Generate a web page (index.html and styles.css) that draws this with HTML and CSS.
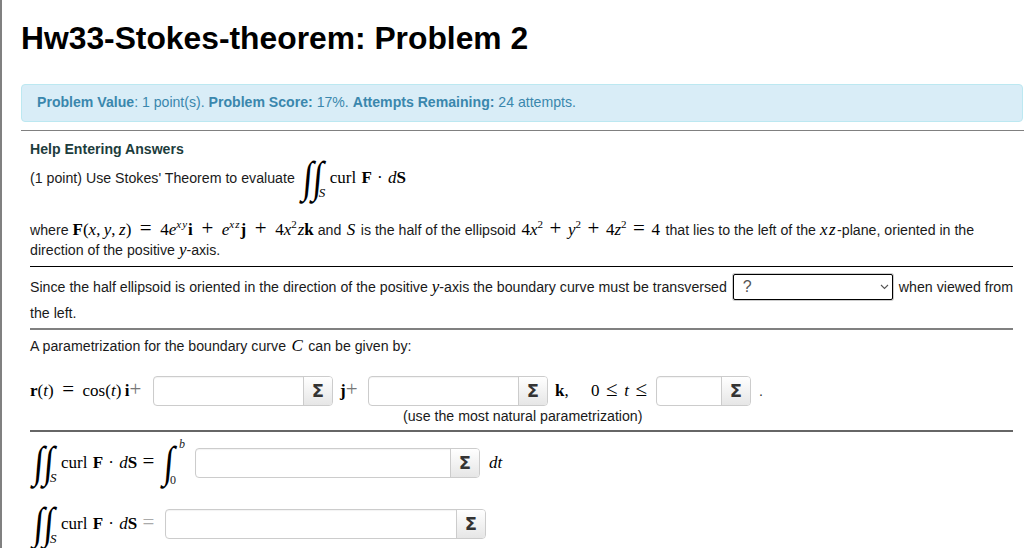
FILE: index.html
```html
<!DOCTYPE html>
<html lang="en">

<head>
    <meta charset="UTF-8">
    <title>Hw33-Stokes-theorem: Problem 2</title>
    <link rel="stylesheet" href="styles.css">
</head>

<body>

    <div class="page">
        <h1 class="title">Hw33-Stokes-theorem: Problem 2</h1>

        <div class="alert">
            <b>Problem Value</b>: 1 point(s). <b>Problem Score:</b> 17%. <b>Attempts Remaining:</b> 24 attempts.
        </div>

        <hr class="rule-top">

        <div class="problem">
            <div class="help">Help Entering Answers</div>

            <div class="row row-intro">
                <span>(1 point) Use Stokes' Theorem to evaluate</span>
                <span class="dbl-int"><span class="int">∫</span><span class="int int-b">∫</span><i class="int-sub">S</i></span>
                <span class="math">curl <b>F</b> · <i>d</i><b>S</b></span>
            </div>

            <p class="para para-where">
                where <span class="math wider"><b>F</b>(<i>x</i>,&thinsp;<i>y</i>,&thinsp;<i>z</i>) <span class="op">=</span> 4<i>e</i><sup><i>xy</i></sup><b>i</b> <span class="op">+</span> <i>e</i><sup><i>xz</i></sup><b>j</b> <span class="op">+</span> 4<i>x</i><sup>2</sup><i>z</i><b>k</b></span>
                and <span class="math pad"><i>S</i></span> is the half of the ellipsoid
                <span class="math wide pad">4<i>x</i><sup>2</sup> <span class="op">+</span> <i>y</i><sup>2</sup> <span class="op">+</span> 4<i>z</i><sup>2</sup> <span class="op">=</span> 4</span>
                that lies to the left of the <span class="math spaced"><i>xz</i></span>-plane, oriented in the
                direction of the positive <span class="math"><i>y</i></span>-axis.
            </p>

            <hr class="rule-black">

            <div class="row row-since">
                <span>Since the half ellipsoid is oriented in the direction of the positive <span class="math"><i>y</i></span>-axis the boundary curve must be transversed</span>
                <div class="fake-select">
                    <span>?</span>
                    <svg class="chevron" width="9" height="6" viewBox="0 0 9 6"><path d="M1 1l3.5 3.5L8 1" fill="none" stroke="#555" stroke-width="1.1"/></svg>
                </div>
                <span>when viewed from</span>
            </div>
            <div class="left-line">the left.</div>

            <hr class="rule-gray">

            <div class="param-line">A parametrization for the boundary curve <span class="math pad"><i>C</i></span> can be given by:</div>

            <div class="row row-r">
                <span class="math wider r-lhs"><b>r</b>(<i>t</i>) <span class="op">=</span> cos(<i>t</i>)&thinsp;<b>i</b><span class="op plus">+</span></span>
                <div class="answer w-180"><input class="answer-input"><span class="sigma">Σ</span></div>
                <span class="math j-label"><b>j</b><span class="op plus">+</span></span>
                <div class="answer w-180"><input class="answer-input"><span class="sigma">Σ</span></div>
                <span class="math k-label"><b>k</b>,</span>
                <span class="math wide range">0 <span class="op">≤</span> <i>t</i> <span class="op">≤</span></span>
                <div class="answer w-95"><input class="answer-input"><span class="sigma">Σ</span></div>
                <span class="dot">.</span>
            </div>
            <div class="natural">(use the most natural parametrization)</div>

            <hr class="rule-dark">

            <div class="row row-int">
                <span class="dbl-int"><span class="int">∫</span><span class="int int-b">∫</span><i class="int-sub">S</i></span>
                <span class="math lhs-a">curl <b>F</b> · <i>d</i><b>S</b> <span class="op">=</span></span>
                <span class="sgl-int"><span class="int">∫</span><i class="lim-top">b</i><span class="lim-bot">0</span></span>
                <div class="answer w-285"><input class="answer-input"><span class="sigma">Σ</span></div>
                <span class="math dt"><i>dt</i></span>
            </div>

            <div class="row row-int row-last">
                <span class="dbl-int"><span class="int">∫</span><span class="int int-b">∫</span><i class="int-sub">S</i></span>
                <span class="math lhs-b">curl <b>F</b> · <i>d</i><b>S</b> <span class="op faded">=</span></span>
                <div class="answer w-321"><input class="answer-input"><span class="sigma">Σ</span></div>
            </div>
        </div>
    </div>

</body>

</html>
```

FILE: styles.css
```css
* {
    box-sizing: border-box;
}

html, body {
    margin: 0;
    height: 548px;
    overflow: hidden;
}

body {
    font-family: "Liberation Sans", Arial, sans-serif;
    font-size: 14.1px;
    color: #1a1a1a;
    background-color: #fff;
    border-left: 2px solid #808080;
}

.page {
    padding-left: 19px;
}

.title {
    margin: 0;
    padding-top: 20px;
    height: 84px;
    font-size: 31.8px;
    line-height: 36px;
    font-weight: bold;
    color: #000;
}

.alert {
    height: 38px;
    margin-right: 1px;
    padding: 0 15px;
    line-height: 35px;
    color: #3a87ad;
    background-color: #d9edf7;
    border: 1px solid #bce8f1;
    border-radius: 4px;
}

hr {
    margin: 0;
    border: 0;
}

.rule-top {
    margin-top: 8px;
    height: 1px;
    background-color: #808080;
}

.problem {
    padding-left: 9px;
    padding-right: 11px;
    font-size: 14.18px;
}

.help {
    margin-top: 11px;
    height: 15px;
    line-height: 15px;
    font-size: 14.1px;
    font-weight: bold;
    color: #1d3d3d;
}

.row {
    display: flex;
    align-items: center;
}

.math {
    font-family: "Liberation Serif", "Times New Roman", serif;
    font-size: 17px;
    line-height: 16px;
    word-spacing: 1px;
    color: #000;
}

.math sup {
    font-size: 11px;
    line-height: 0;
}

.op {
    font-size: 21px;
    line-height: 0;
}

.wide {
    word-spacing: 2.3px;
}

.wider {
    word-spacing: 4.3px;
}

.wider sup {
    letter-spacing: 1px;
}

.pad {
    padding: 0 1.5px;
}

.spaced {
    letter-spacing: 1.5px;
}

.row-intro {
    margin-top: 1px;
    height: 40px;
}

.dbl-int {
    position: relative;
    display: inline-block;
    width: 32px;
    height: 40px;
    margin-left: 3px;
    flex: none;
}

.int {
    position: absolute;
    left: 4px;
    top: 0;
    font-family: "Liberation Serif", serif;
    font-size: 44px;
    line-height: 40px;
    color: #000;
    transform: scaleX(0.8) skewX(-6deg);
}

.int-b {
    left: 14px;
}

.int-sub {
    position: absolute;
    left: 21px;
    bottom: -3px;
    font-family: "Liberation Serif", serif;
    font-size: 13px;
    color: #000;
}

.para {
    margin: 0;
    line-height: 20px;
}

.para-where {
    margin-top: 22px;
}

.rule-black {
    margin-top: 6px;
    height: 1px;
    background-color: #000;
}

.row-since {
    height: 26px;
    margin-top: 7px;
    gap: 6px;
    white-space: nowrap;
}

.fake-select {
    display: flex;
    align-items: center;
    justify-content: space-between;
    flex: none;
    width: 160px;
    height: 26px;
    padding: 0 3px 0 9px;
    font-size: 16px;
    color: #555;
    background-color: #fff;
    border: 1px solid #000;
    border-radius: 2px;
    box-shadow: 0 0 0 1px #ccc;
}

.left-line {
    margin-top: 3px;
    line-height: 20px;
}

.rule-gray {
    margin-top: 5px;
    height: 2px;
    background-color: #808080;
}

.param-line {
    margin-top: 6px;
    line-height: 20px;
}

.row-r {
    margin-top: 20px;
    height: 30px;
}

.r-lhs {
    width: 123px;
    flex: none;
}

.plus {
    color: #777;
}

.faded {
    color: #aaa;
}

.answer {
    display: flex;
    height: 30px;
    flex: none;
    background-color: #fff;
    border: 1px solid #ccc;
    border-radius: 4px;
    box-shadow: inset 0 1px 1px rgba(0, 0, 0, 0.05);
}

.answer-input {
    flex: 1;
    min-width: 0;
    padding: 0;
    border: 0;
    outline: 0;
    background: transparent;
}

.sigma {
    width: 29px;
    flex: none;
    text-align: center;
    font-family: "DejaVu Sans", sans-serif;
    font-size: 18px;
    font-weight: bold;
    line-height: 28px;
    color: #333;
    background: linear-gradient(#fff, #e6e6e6);
    border-left: 1px solid #ccc;
    border-radius: 0 3px 3px 0;
}

.w-180 {
    width: 180px;
}

.w-95 {
    width: 95px;
}

.w-285 {
    width: 285px;
}

.w-321 {
    width: 321px;
}

.j-label {
    width: 35px;
    flex: none;
    padding-left: 7px;
}

.k-label {
    width: 43px;
    flex: none;
    padding-left: 7px;
}

.range {
    width: 65px;
    flex: none;
}

.dot {
    margin-left: 8px;
    color: #333;
}

.natural {
    padding-left: 373px;
    line-height: 20px;
}

.rule-dark {
    margin-top: 4px;
    height: 2px;
    background-color: #666;
}

.row-int {
    margin-top: 16px;
    height: 30px;
}

.row-last {
    margin-top: 31px;
}

.row-int .dbl-int {
    margin-left: -1px;
}

.lhs-a {
    width: 98px;
    flex: none;
}

.lhs-b {
    width: 104px;
    flex: none;
}

.sgl-int {
    position: relative;
    display: inline-block;
    width: 36px;
    height: 40px;
    flex: none;
}

.lim-top {
    position: absolute;
    left: 20px;
    top: -6px;
    font-family: "Liberation Serif", serif;
    font-size: 12px;
}

.lim-bot {
    position: absolute;
    left: 11px;
    bottom: -5px;
    font-family: "Liberation Serif", serif;
    font-size: 12px;
}

.dt {
    margin-left: 9px;
}
```
